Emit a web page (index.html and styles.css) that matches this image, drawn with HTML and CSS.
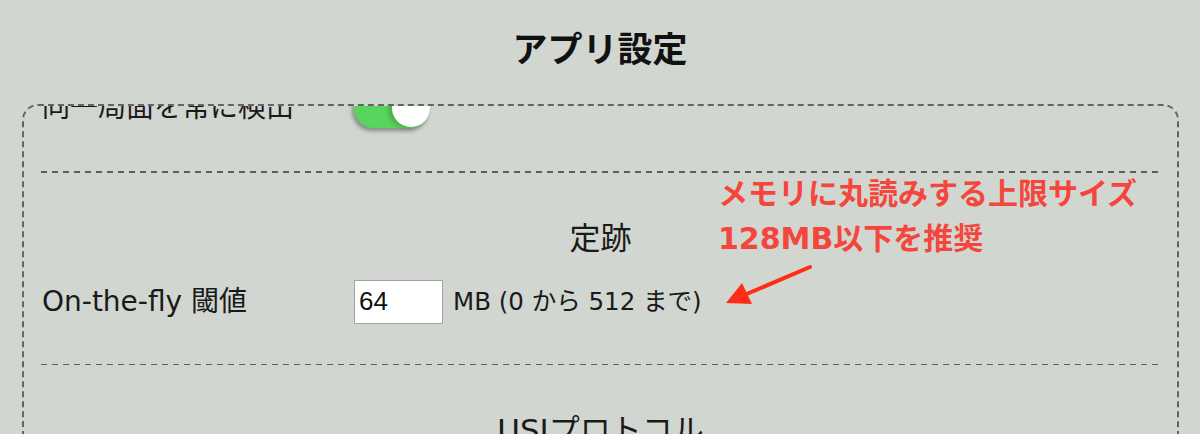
FILE: index.html
```html
<!DOCTYPE html>
<html lang="ja">
<head>
<meta charset="utf-8">
<title>アプリ設定</title>
<link rel="stylesheet" href="styles.css">
</head>
<body>
<header class="header">
  <h1 class="title">アプリ設定</h1>
</header>
<main class="panel">
  <div class="panel-scroll">
    <div class="row row-first">
      <span class="label">同一局面を常に検出</span>
      <span class="toggle"><span class="knob"></span></span>
    </div>
    <div class="sep"></div>
    <section class="section">
      <h2 class="section-title">定跡</h2>
      <div class="row row-input">
        <span class="label">On-the-fly 閾値</span>
        <span class="field">
          <input class="num" type="text" value="64">
          <span class="unit">MB (0 から 512 まで)</span>
        </span>
      </div>
    </section>
    <div class="sep"></div>
    <section class="section">
      <h2 class="section-title">USIプロトコル</h2>
    </section>
  </div>
</main>
<div class="note">
  <p class="note-line">メモリに丸読みする上限サイズ</p>
  <p class="note-line">128MB以下を推奨</p>
</div>
<svg class="arrow" width="100" height="60" viewBox="0 0 100 60">
  <line x1="90" y1="7" x2="22" y2="36" stroke="#ff2d17" stroke-width="4" stroke-linecap="round"/>
  <polygon points="6,43 32,44 22,23" fill="#ff2d17"/>
</svg>
</body>
</html>
```
FILE: styles.css
```css
html, body {
  margin: 0;
  padding: 0;
}
body {
  background: #d1d6d0;
  width: 1200px;
  height: 434px;
  overflow: hidden;
  position: relative;
  color: #1a1a1a;
  font-family: "DejaVu Sans", "Noto Sans CJK JP", sans-serif;
}
.header {
  height: 104px;
  box-sizing: border-box;
  padding-top: 27px;
}
.title {
  margin: 0;
  text-align: center;
  font-family: "Noto Sans CJK JP", sans-serif;
  font-weight: 700;
  font-size: 35px;
  line-height: 40px;
  color: #111;
}
.panel {
  margin: 0 21px 0 22px;
  border: 2px dashed #646464;
  border-radius: 16px;
  height: 420px;
  overflow: hidden;
  box-sizing: border-box;
}
.panel-scroll {
  margin-top: -28px;
  padding: 0 17px 0 17px;
}
.row {
  display: grid;
  grid-template-columns: 313px 1fr;
  align-items: center;
}
.row-first {
  height: 60px;
}
.label {
  font-size: 28px;
  line-height: 40px;
  padding-left: 1px;
}
.toggle {
  display: block;
  position: relative;
  width: 76px;
  height: 40px;
  border-radius: 20px;
  background: #58d55c;
  box-shadow: -2px 3px 4px rgba(0, 0, 0, 0.35);
}
.knob {
  position: absolute;
  right: 0;
  top: 1px;
  width: 38px;
  height: 38px;
  border-radius: 50%;
  background: #fff;
  box-shadow: -4px 1px 4px rgba(0, 0, 0, 0.18);
}
.sep {
  height: 1.5px;
  margin-top: 33px;
  background: repeating-linear-gradient(90deg, #5e5e5e 0 6px, transparent 6px 11px);
}
.section {
  padding: 45px 0 40px;
}
.section-title {
  margin: 0 0 22px;
  text-align: center;
  font-weight: 400;
  font-family: "DejaVu Sans", "Noto Sans CJK JP", sans-serif;
  font-size: 31px;
  line-height: 40px;
  color: #1a1a1a;
}
.section + .sep {
  margin-top: 0;
}
.row-input {
  height: 44px;
}
.field {
  display: flex;
  align-items: center;
  gap: 10px;
}
.num {
  width: 89px;
  height: 44px;
  box-sizing: border-box;
  margin: 0;
  border: 1px solid #a3a3a3;
  background: #fff;
  padding: 0 4px;
  font-family: "Liberation Sans", sans-serif;
  font-size: 26px;
  color: #111;
  outline: none;
}
.unit {
  font-size: 24.5px;
  line-height: 40px;
  white-space: nowrap;
}
.note {
  position: absolute;
  left: 718px;
  top: 171px;
  color: #f4463d;
  font-family: "DejaVu Sans", "Noto Sans CJK JP", sans-serif;
  font-weight: 700;
  font-size: 30px;
  line-height: 45px;
}
.note-line {
  margin: 0;
  white-space: nowrap;
}
.arrow {
  position: absolute;
  left: 720px;
  top: 260px;
}
```
